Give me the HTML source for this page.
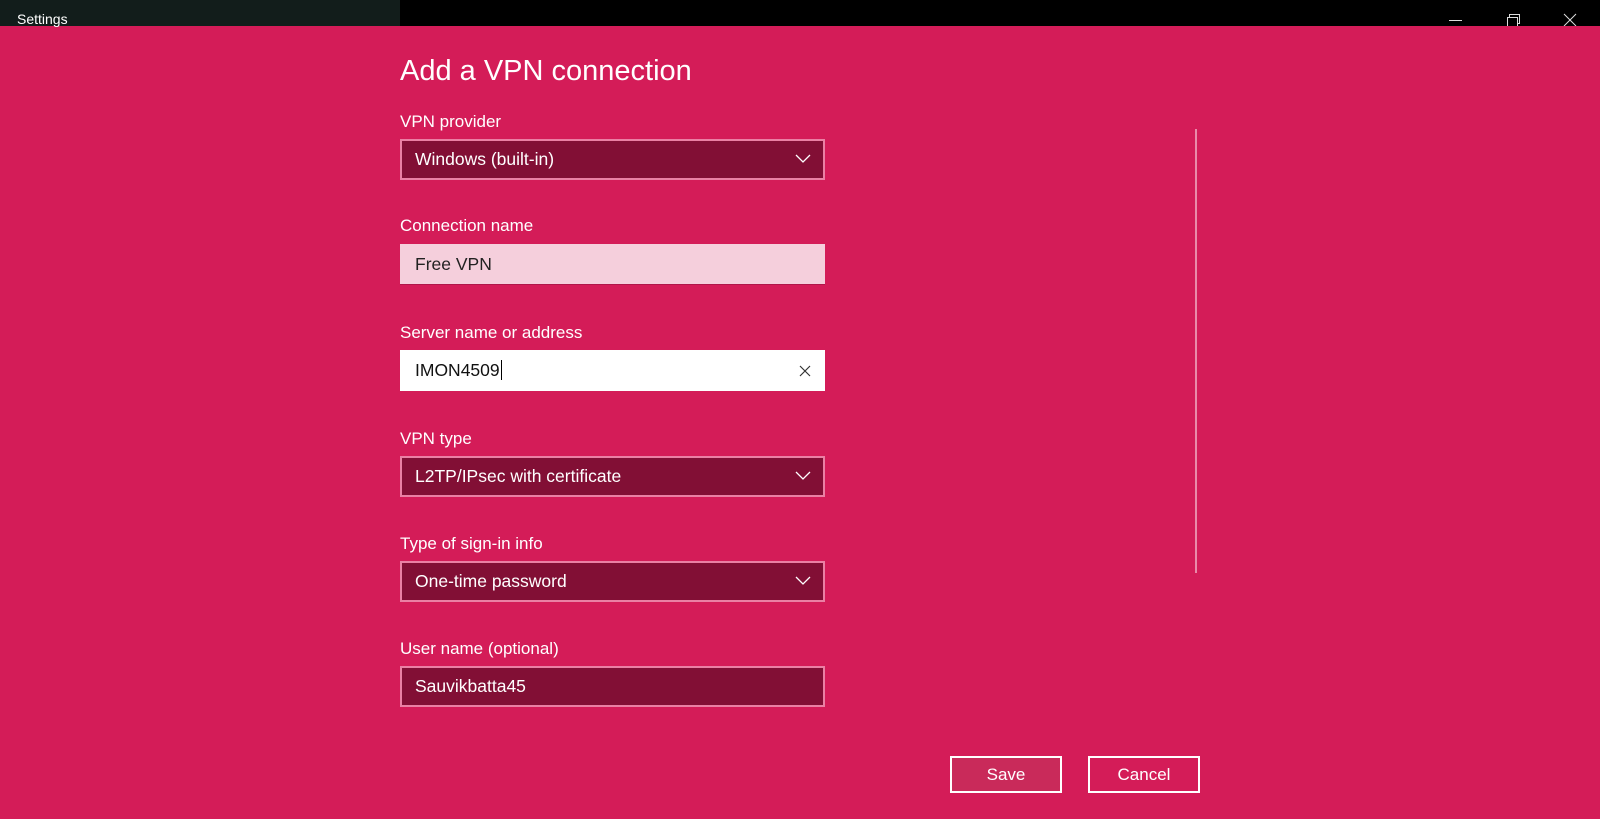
<!DOCTYPE html>
<html><head><style>
*{margin:0;padding:0;box-sizing:border-box}
body{width:1600px;height:819px;background:#d41c58;font-family:"Segoe UI","Liberation Sans",sans-serif;color:#fff;position:relative;overflow:hidden}
.top{position:absolute;left:0;top:0;width:1600px;height:26px;background:#000}
.topl{position:absolute;left:0;top:0;width:400px;height:26px;background:#121d1b}
.t{position:absolute;left:17px;top:11px;font-size:14px}
h1{position:absolute;left:400px;top:55px;font-size:29px;font-weight:normal}
.lab{position:absolute;left:400px;font-size:17px}
.f{position:absolute;left:400px;width:425px;height:41px;font-size:17.5px;padding:0 15px;line-height:40px}
.dd{background:#820f35;border:2px solid #ea80a4;padding-left:13px;line-height:37px}
.dd svg{position:absolute;right:12px;top:13px}
.btn{position:absolute;top:756px;height:37px;border:2px solid #fff;font-size:17px;text-align:center;line-height:33px}
</style></head><body>
<div class="top"></div><div class="topl"></div>
<div class="t">Settings</div>
<svg style="position:absolute;left:1380px;top:0" width="220" height="26">
<line x1="69" y1="20.5" x2="82" y2="20.5" stroke="#ddd"/>
<rect x="127.5" y="17.5" width="10" height="9" fill="none" stroke="#ddd"/>
<path d="M129.5 17.5V14.5H139.5V23.5H137.5" fill="none" stroke="#ddd"/>
<path d="M184 14L196 26M196 14L184 26" stroke="#ddd"/>
</svg>
<h1>Add a VPN connection</h1>
<div class="lab" style="top:112px">VPN provider</div>
<div class="f dd" style="top:139px">Windows (built-in)<svg width="16" height="10"><path d="M1 1L8 8L15 1" fill="none" stroke="#fff" stroke-width="1.3"/></svg></div>
<div class="lab" style="top:216px">Connection name</div>
<div class="f" style="top:244px;background:#f5cfdc;color:#222;border-bottom:1px solid #b0164a">Free VPN</div>
<div class="lab" style="top:323px">Server name or address</div>
<div class="f" style="top:350px;background:#fff;color:#111">IMON4509<span style="border-left:1px solid #000;margin-left:1px"></span><svg style="position:absolute;right:14px;top:15px" width="12" height="12"><path d="M1 1L11 11M11 1L1 11" stroke="#333" stroke-width="1.2"/></svg></div>
<div class="lab" style="top:429px">VPN type</div>
<div class="f dd" style="top:456px">L2TP/IPsec with certificate<svg width="16" height="10"><path d="M1 1L8 8L15 1" fill="none" stroke="#fff" stroke-width="1.3"/></svg></div>
<div class="lab" style="top:534px">Type of sign-in info</div>
<div class="f dd" style="top:561px">One-time password<svg width="16" height="10"><path d="M1 1L8 8L15 1" fill="none" stroke="#fff" stroke-width="1.3"/></svg></div>
<div class="lab" style="top:639px">User name (optional)</div>
<div class="f dd" style="top:666px">Sauvikbatta45</div>
<div style="position:absolute;left:1195px;top:129px;width:2px;height:444px;background:#e98aa9"></div>
<div class="btn" style="left:950px;width:112px;background:#c92a5a">Save</div>
<div class="btn" style="left:1088px;width:112px">Cancel</div>
</body></html>
